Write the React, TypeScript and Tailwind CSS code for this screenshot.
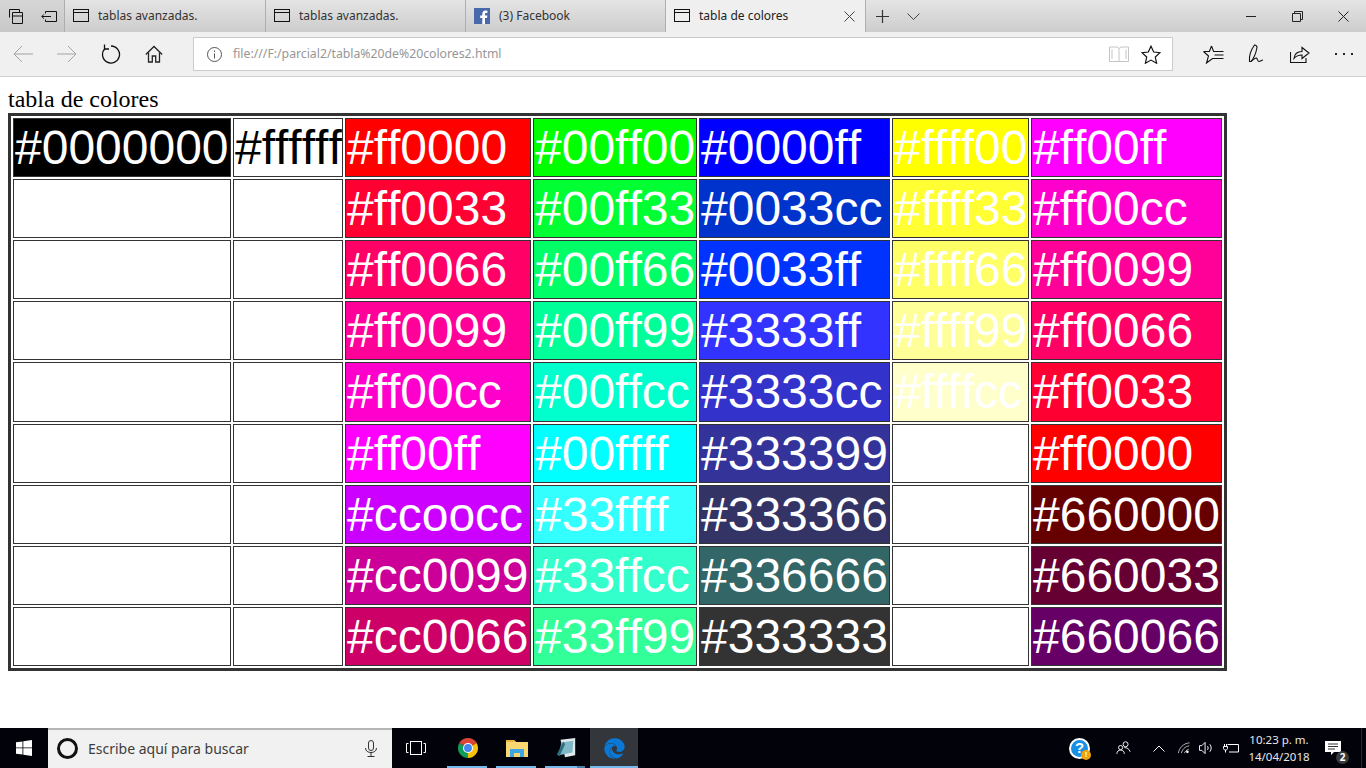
import { FaEdge } from 'react-icons/fa';

type Cell = { label: string; bg: string; text?: string };

const e: Cell = { label: '', bg: 'bg-white' };

const rows: Cell[][] = [
  [
    { label: '#0000000', bg: 'bg-[#000000]' },
    { label: '#ffffff', bg: 'bg-white', text: 'text-black' },
    { label: '#ff0000', bg: 'bg-[#ff0000]' },
    { label: '#00ff00', bg: 'bg-[#00ff00]' },
    { label: '#0000ff', bg: 'bg-[#0000ff]' },
    { label: '#ffff00', bg: 'bg-[#ffff00]' },
    { label: '#ff00ff', bg: 'bg-[#ff00ff]' },
  ],
  [
    e,
    e,
    { label: '#ff0033', bg: 'bg-[#ff0033]' },
    { label: '#00ff33', bg: 'bg-[#00ff33]' },
    { label: '#0033cc', bg: 'bg-[#0033cc]' },
    { label: '#ffff33', bg: 'bg-[#ffff33]' },
    { label: '#ff00cc', bg: 'bg-[#ff00cc]' },
  ],
  [
    e,
    e,
    { label: '#ff0066', bg: 'bg-[#ff0066]' },
    { label: '#00ff66', bg: 'bg-[#00ff66]' },
    { label: '#0033ff', bg: 'bg-[#0033ff]' },
    { label: '#ffff66', bg: 'bg-[#ffff66]' },
    { label: '#ff0099', bg: 'bg-[#ff0099]' },
  ],
  [
    e,
    e,
    { label: '#ff0099', bg: 'bg-[#ff0099]' },
    { label: '#00ff99', bg: 'bg-[#00ff99]' },
    { label: '#3333ff', bg: 'bg-[#3333ff]' },
    { label: '#ffff99', bg: 'bg-[#ffff99]' },
    { label: '#ff0066', bg: 'bg-[#ff0066]' },
  ],
  [
    e,
    e,
    { label: '#ff00cc', bg: 'bg-[#ff00cc]' },
    { label: '#00ffcc', bg: 'bg-[#00ffcc]' },
    { label: '#3333cc', bg: 'bg-[#3333cc]' },
    { label: '#ffffcc', bg: 'bg-[#ffffcc]' },
    { label: '#ff0033', bg: 'bg-[#ff0033]' },
  ],
  [
    e,
    e,
    { label: '#ff00ff', bg: 'bg-[#ff00ff]' },
    { label: '#00ffff', bg: 'bg-[#00ffff]' },
    { label: '#333399', bg: 'bg-[#333399]' },
    e,
    { label: '#ff0000', bg: 'bg-[#ff0000]' },
  ],
  [
    e,
    e,
    { label: '#ccoocc', bg: 'bg-[#cc00ff]' },
    { label: '#33ffff', bg: 'bg-[#33ffff]' },
    { label: '#333366', bg: 'bg-[#333366]' },
    e,
    { label: '#660000', bg: 'bg-[#660000]' },
  ],
  [
    e,
    e,
    { label: '#cc0099', bg: 'bg-[#cc0099]' },
    { label: '#33ffcc', bg: 'bg-[#33ffcc]' },
    { label: '#336666', bg: 'bg-[#336666]' },
    e,
    { label: '#660033', bg: 'bg-[#660033]' },
  ],
  [
    e,
    e,
    { label: '#cc0066', bg: 'bg-[#cc0066]' },
    { label: '#33ff99', bg: 'bg-[#33ff99]' },
    { label: '#333333', bg: 'bg-[#333333]' },
    e,
    { label: '#660066', bg: 'bg-[#660066]' },
  ],
];

const colWidths = ['w-[218px]', 'w-[110px]', 'w-[186px]', 'w-[164px]', 'w-[191px]', 'w-[137px]', 'w-[191px]'];

function PageIcon() {
  return (
    <svg width="16" height="14" viewBox="0 0 16 14" fill="none" stroke="#111" strokeWidth="1" className="shrink-0">
      <rect x="0.5" y="0.5" width="15" height="12" />
      <path d="M0.5 3.5H15.5" />
    </svg>
  );
}

function FacebookIcon() {
  return (
    <svg width="16" height="16" viewBox="0 0 16 16" className="shrink-0">
      <rect width="16" height="16" fill="#4a69ad" />
      <path d="M11 16V10h2l.4-2.4H11V6.2c0-.8.3-1.2 1.2-1.2h1.2V2.8C13 2.7 12.300 2.600 11.500 2.600 9.600 2.600 8.300 3.800 8.300 5.900V7.600H6.200V10h2.100V16Z" fill="#fff" />
    </svg>
  );
}

function Tab({ title, icon, active, wide }: { title: string; icon: React.ReactNode; active?: boolean; wide?: boolean }) {
  return (
    <div
      className={`flex h-[32px] shrink-0 items-center gap-[9px] border-r border-[#aeaeae] pl-[8px] text-[12px] ${
        wide ? 'w-[201px]' : 'w-[200px]'
      } ${active ? 'bg-[#efefef] text-[#222]' : 'text-[#333]'}`}
    >
      {icon}
      <span className="flex-1">{title}</span>
      {active ? (
        <svg width="11" height="11" viewBox="0 0 11 11" stroke="#444" strokeWidth="1" className="mr-[10px]">
          <path d="M.5.5l10 10M10.500.5l-10 10" />
        </svg>
      ) : null}
    </div>
  );
}

function TabBar() {
  return (
    <div className="flex h-[32px] items-stretch bg-gradient-to-b from-[#e4e4e4] to-[#cdcdcd]">
      <div className="flex w-[65px] shrink-0 items-center gap-[17px] border-r border-[#aeaeae] bg-gradient-to-b from-[#d6d6d6] to-[#c8c8c8] pl-[9px]">
        <svg width="15" height="15" viewBox="0 0 15 15" fill="none" stroke="#111" strokeWidth="1">
          <path d="M.5 8.500V.5H10.500V3.500" />
          <path d="M3.500 11.500V3.500H13.500V14.500H3.500Z" />
          <path d="M3.500 7H13.500" />
        </svg>
        <svg width="16" height="11" viewBox="0 0 16 11" fill="none" stroke="#111" strokeWidth="1">
          <path d="M4.500 2.500V.5H15.500V10.500H4.500V8.500" />
          <path d="M10 5.500H.8M3 3.300L.8 5.500 3 7.700" />
        </svg>
      </div>
      <Tab title="tablas avanzadas." icon={<PageIcon />} wide />
      <Tab title="tablas avanzadas." icon={<PageIcon />} />
      <Tab title="(3) Facebook" icon={<FacebookIcon />} />
      <Tab title="tabla de colores" icon={<PageIcon />} active />
      <div className="flex items-center gap-[18px] pl-[10px]">
        <svg width="13" height="13" viewBox="0 0 13 13" stroke="#333" strokeWidth="1.200">
          <path d="M6.500 0V13M0 6.500H13" />
        </svg>
        <svg width="13" height="7" viewBox="0 0 13 7" fill="none" stroke="#444" strokeWidth="1">
          <path d="M.5.5l6 6 6-6" />
        </svg>
      </div>
      <div className="ml-auto flex items-center">
        <div className="flex w-[46px] justify-center">
          <div className="h-px w-[10px] bg-[#222]" />
        </div>
        <div className="flex w-[46px] justify-center">
          <svg width="11" height="11" viewBox="0 0 11 11" fill="none" stroke="#222" strokeWidth="1">
            <path d="M.5 2.500H8.500V10.500H.5Z" />
            <path d="M2.500 2.500V.5H10.500V8.500H8.500" />
          </svg>
        </div>
        <div className="flex w-[46px] justify-center">
          <svg width="11" height="11" viewBox="0 0 11 11" stroke="#222" strokeWidth="1">
            <path d="M.5.5l10 10M10.500.5l-10 10" />
          </svg>
        </div>
      </div>
    </div>
  );
}

function ToolBar() {
  return (
    <div className="flex h-[45px] items-center border-b border-[#cfcfcf] bg-[#f0f0f0]">
      <div className="flex w-[193px] shrink-0 items-center pl-[13px]">
        <svg width="20" height="18" viewBox="0 0 20 18" fill="none" stroke="#a3a3a3" strokeWidth="1">
          <path d="M1 9H20M9 1L1 9l8 8" />
        </svg>
        <svg width="20" height="18" viewBox="0 0 20 18" fill="none" stroke="#a3a3a3" strokeWidth="1" className="ml-[24px]">
          <path d="M0 9H19M11 1l8 8-8 8" />
        </svg>
        <svg width="20" height="20" viewBox="0 0 20 20" fill="none" stroke="#111" strokeWidth="1.300" className="ml-[24px]">
          <path d="M10 2A8.500 8.500 0 1 1 4 4.500" />
          <path d="M3.500 .5V5H8" />
        </svg>
        <svg width="18" height="18" viewBox="0 0 18 18" fill="none" stroke="#222" strokeWidth="1.300" className="ml-[24px]">
          <path d="M.8 9.500L9 1.500l8.200 8" />
          <path d="M3.500 7.500V17H7.300V11H10.700V17H14.500V7.500" />
        </svg>
      </div>
      <div className="flex h-[34px] w-[980px] shrink-0 items-center border border-[#cccccc] bg-white pl-[13px] text-[12.250px] text-[#969696]">
        <svg width="15" height="15" viewBox="0 0 15 15" fill="none" stroke="#555" strokeWidth="1">
          <circle cx="7.500" cy="7.500" r="7" />
          <path d="M7.500 6.500V11.500M7.500 3.500V5" />
        </svg>
        <span className="ml-[11px] flex-1">file:///F:/parcial2/tabla%20de%20colores2.html</span>
        <svg width="20" height="17" viewBox="0 0 20 17" fill="none" stroke="#c4c4c4" strokeWidth="1">
          <path d="M.5 1H8L10 2.500 12 1H19.500V15.500H.5Z" />
          <path d="M10 2.500V15.500M3 3.500V13M17 3.500V13" />
        </svg>
        <svg width="20" height="19" viewBox="0 0 20 19" fill="none" stroke="#111" strokeWidth="1.200" className="ml-[12px] mr-[11px]">
          <path d="M10 1.200l2.700 5.800 6.300.7-4.700 4.300 1.300 6.200L10 15.100l-5.600 3.100 1.300-6.200L1 7.700l6.300-.7Z" />
        </svg>
      </div>
      <div className="flex flex-1 items-center pl-[30px]">
        <svg width="21" height="19" viewBox="0 0 21 19" fill="none" stroke="#111" strokeWidth="1.100">
          <path d="M8.500 1L10.600 6.500H20.500M.5 6.500H6.400L8.500 1M.5 6.500L5.500 11 3.500 18 9.500 13.500H20.500M11.500 10H20.500" />
        </svg>
        <svg width="20" height="20" viewBox="0 0 20 20" fill="none" stroke="#111" strokeWidth="1.100" className="ml-[24px]">
          <path d="M1.500 17.500C1 13 2.500 6.500 6.500 1c1.500.2 2.500 1 2.500 2.500C8 9 6 14 3 17.500Z" />
          <path d="M3 17.500c2-1.500 4-4 5.500-3.500 1 .5 1 3.500 2.500 3.500 1.500 0 2.500-1.500 4-1.500" />
        </svg>
        <svg width="20" height="18" viewBox="0 0 20 18" fill="none" stroke="#111" strokeWidth="1.100" className="ml-[22px]">
          <path d="M.5 7V17.500H16V13" />
          <path d="M4 13.500c.5-4.500 3-7 8-7V2.500l7 5.500-7 5.500V10c-3.500 0-6 1-8 3.500Z" />
        </svg>
        <div className="ml-[25px] flex gap-[6px]">
          <div className="size-[2px] bg-[#222]" />
          <div className="size-[2px] bg-[#222]" />
          <div className="size-[2px] bg-[#222]" />
        </div>
      </div>
    </div>
  );
}

function ColorTable() {
  return (
    <table className="w-[1219px] table-fixed border-separate border-spacing-[2px] border-[3px] border-[#333333] font-['Liberation_Sans',Arial,sans-serif] text-[48px] [font-kerning:none] [font-variant-ligatures:none]">
      <colgroup>
        {colWidths.map((w, i) => (
          <col key={i} className={w} />
        ))}
      </colgroup>
      <tbody>
        {rows.map((row, i) => (
          <tr key={i}>
            {row.map((cell, j) => (
              <td
                key={j}
                className={`h-[59.110px] overflow-visible whitespace-nowrap border border-[#333333] p-[1px] align-middle leading-[55px] ${cell.bg} ${cell.text ?? 'text-white'}`}
              >
                {cell.label}
              </td>
            ))}
          </tr>
        ))}
      </tbody>
    </table>
  );
}

function ChromeIcon() {
  return (
    <svg width="22" height="22" viewBox="0 0 24 24">
      <path d="M12 12L21.500 6.500A11 11 0 0 0 2.500 6.500Z" fill="#db4437" />
      <path d="M12 12L2.500 6.500A11 11 0 0 0 12 23Z" fill="#0f9d58" />
      <path d="M12 12L12 23A11 11 0 0 0 21.500 6.500Z" fill="#f4c20d" />
      <circle cx="12" cy="12" r="5.500" fill="#fff" />
      <circle cx="12" cy="12" r="4.300" fill="#4285f4" />
    </svg>
  );
}

function TaskIcon({ children, dim }: { children: React.ReactNode; dim?: boolean }) {
  return (
    <div className="relative flex h-[40px] w-[49px] shrink-0 items-center justify-center">
      {children}
      <div className={`absolute bottom-0 left-[4px] h-[2px] bg-[#76b9ed] ${dim ? 'w-[32px]' : 'w-[40px]'}`} />
      {dim ? <div className="absolute bottom-0 left-[36px] h-[2px] w-[8px] bg-[#4a7fa8]" /> : null}
    </div>
  );
}

function TaskBar() {
  return (
    <div className="flex h-[40px] items-stretch bg-[#02030a] text-white">
      <div className="flex w-[48px] shrink-0 items-center justify-center">
        <svg width="16" height="16" viewBox="0 0 16 16" fill="#fff">
          <path d="M0 2.300L6.500 1.400V7.500H0ZM7.300 1.300L16 0V7.500H7.300ZM0 8.300H6.500V14.600L0 13.700ZM7.300 8.300H16V16L7.300 14.700Z" />
        </svg>
      </div>
      <div className="flex w-[344px] shrink-0 items-center border-t-2 border-[#b5b5b5] bg-[#f1f1f1] pb-[2px] pl-[9px] text-[14px] text-[#3d3d3d]">
        <div className="size-[21px] rounded-full border-[3px] border-[#111]" />
        <span className="ml-[10px] flex-1">Escribe aquí para buscar</span>
        <svg width="12" height="17" viewBox="0 0 12 17" fill="none" stroke="#333" strokeWidth="1" className="mr-[15px]">
          <rect x="3.500" y=".5" width="5" height="10" rx="2.500" />
          <path d="M.5 8c0 3 2.500 4.500 5.500 4.500S11.500 11 11.500 8M6 12.500V16M2.500 16.500H9.500" />
        </svg>
      </div>
      <div className="mr-[3px] flex w-[48px] shrink-0 items-center justify-center">
        <svg width="20" height="14" viewBox="0 0 20 14" fill="none" stroke="#fff" strokeWidth="1">
          <rect x="4.500" y=".5" width="11" height="13" />
          <path d="M2.500 2.500H.5V11.500H2.500M17.500 2.500H19.500V11.500H17.500" />
        </svg>
      </div>
      <TaskIcon>
        <ChromeIcon />
      </TaskIcon>
      <TaskIcon>
        <svg width="22" height="18" viewBox="0 0 22 18">
          <path d="M0 1H8L10 3H22V18H0Z" fill="#fbd774" />
          <path d="M0 1H8L10 3H0Z" fill="#e8b53e" />
          <path d="M4 18V10H18V18H14V14H8V18Z" fill="#3da7e3" />
        </svg>
      </TaskIcon>
      <TaskIcon dim>
        <svg width="22" height="22" viewBox="0 0 22 24">
          <path d="M5 3L21 1V20L10 22Z" fill="#dfe8ea" />
          <path d="M6 6L19 4 18 17 3 20Z" fill="#7fb9c7" />
          <path d="M8 5L1 19 4 21 10 8Z" fill="#2e6d80" />
        </svg>
      </TaskIcon>
      <div className="relative flex w-[48px] shrink-0 items-center justify-center bg-[#33363b]">
        <FaEdge size={21} color="#0a78d7" />
        <div className="absolute bottom-0 left-0 h-[2px] w-[48px] bg-[#76b9ed]" />
      </div>
      <div className="ml-auto flex items-center">
        <div className="relative flex size-[21px] items-center justify-center rounded-full border-2 border-white bg-[#1a8fe3] font-['Liberation_Sans',sans-serif] text-[15px] font-bold">
          ?
          <div className="absolute -bottom-[3px] -right-[3px] flex size-[10px] items-center justify-center rounded-full bg-[#f0a30a] text-[8px] leading-none">
            !
          </div>
        </div>
        <svg width="15" height="16" viewBox="0 0 18 18" fill="none" stroke="#fff" strokeWidth="1.100" className="ml-[26px]">
          <circle cx="11.500" cy="4.500" r="3" />
          <circle cx="5.500" cy="8.500" r="2.500" />
          <path d="M1 16c0-3 2-4.500 4.500-4.500S10 13 10 16M10 8.500c3 0 6 1.500 7 5" />
        </svg>
        <svg width="12" height="7" viewBox="0 0 12 7" fill="none" stroke="#fff" strokeWidth="1" className="ml-[22px]">
          <path d="M.5 6.500L6 1l5.500 5.500" />
        </svg>
        <svg width="12" height="12" viewBox="0 0 14 13" fill="none" stroke="#cfcfcf" strokeWidth="1" className="ml-[13px]">
          <path d="M.5 12.500C1 7 6 1 13.500.5M4 12.500C4.500 9 8 4.500 13 4M7.500 12.500C8 11 10 8.500 12.500 8" />
          <circle cx="11" cy="11" r="1.500" fill="#fff" stroke="none" />
        </svg>
        <svg width="15" height="14" viewBox="0 0 16 14" fill="none" stroke="#fff" strokeWidth="1" className="ml-[9px]">
          <path d="M.5 4.500H3L6.500 1V13L3 9.500H.5Z" />
          <path d="M9 5c1 1 1 3 0 4M11.500 3c2 2 2 6 0 8" />
        </svg>
        <svg width="16" height="10" viewBox="0 0 16 10" fill="none" stroke="#fff" strokeWidth="1" className="ml-[9px]">
          <path d="M4.500 1.500H15.500V9H6" />
          <path d="M15.500 3.500V7M.5 3.500H4.500V5.500C4.500 6.500 3.500 7 2.500 7S.5 6.500.5 5.500ZM1.500 3.500V1M3.500 3.500V1M2.500 7V9.500" />
        </svg>
        <div className="ml-[11px] flex w-[58px] flex-col items-center whitespace-nowrap pb-[1px] text-[11.500px] leading-[17px] text-[#e8e8e8]">
          <span>10:23 p. m.</span>
          <span>14/04/2018</span>
        </div>
        <div className="relative ml-[17px] mr-[20px]">
          <svg width="16" height="15" viewBox="0 0 16 15" fill="#fff">
            <path d="M0 0H16V11H9L6 14V11H0Z" />
            <path d="M3 3H13M3 5.500H13M3 8H10" stroke="#333" strokeWidth="1" />
          </svg>
          <div className="absolute -bottom-[8px] -right-[8px] flex size-[13px] items-center justify-center rounded-full bg-[#3a3a3a] text-[10px] font-bold leading-none">
            2
          </div>
        </div>
        <div className="mr-[4px] h-[40px] w-px bg-[#2a2a2e]" />
      </div>
    </div>
  );
}

export default function App() {
  return (
    <div className="flex h-[768px] flex-col overflow-hidden bg-white font-['Noto_Sans',sans-serif]">
      <TabBar />
      <ToolBar />
      <main className="min-h-0 flex-1 px-[8px] pt-[8px] font-['Liberation_Serif',serif] text-black">
        <div className="text-[24px] leading-[28px]">tabla de colores</div>
        <ColorTable />
      </main>
      <TaskBar />
    </div>
  );
}
